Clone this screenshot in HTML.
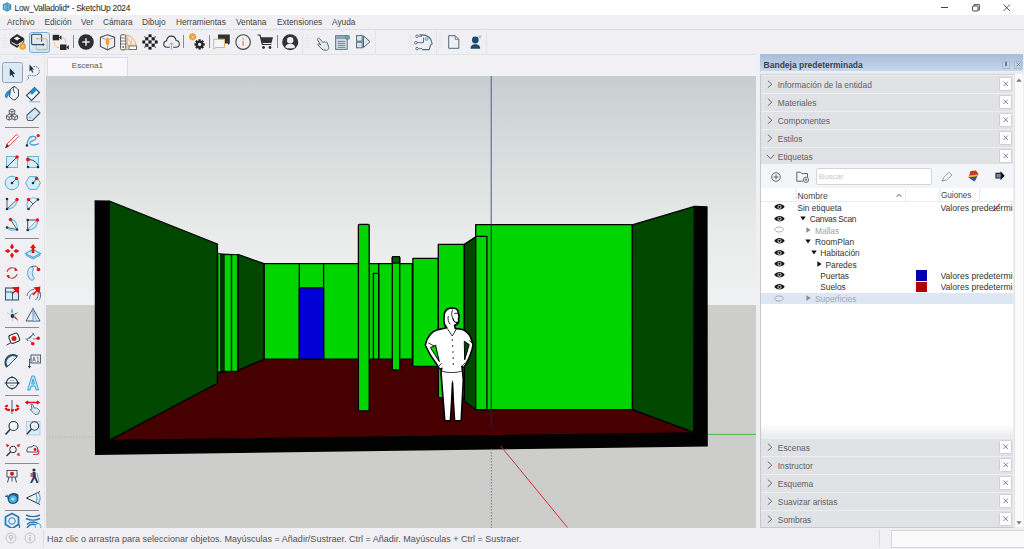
<!DOCTYPE html>
<html><head><meta charset="utf-8"><style>
*{margin:0;padding:0;box-sizing:border-box}
html,body{width:1024px;height:549px;overflow:hidden;background:#f0f0f4;font-family:"Liberation Sans",sans-serif;color:#333}
.a{position:absolute}
.t{position:absolute;white-space:nowrap;line-height:1}
svg.a{overflow:visible}
</style></head><body>
<div class="a" style="left:0px;top:0px;width:1024px;height:15px;background:#fff"></div>
<svg class="a" style="left:1.5px;top:2px" width="10" height="10" viewBox="0 0 10 10"><path d="M5,0.3 L9.2,2.6 V7.4 L5,9.7 L0.8,7.4 V2.6 Z" fill="#3d8fc0"/><path d="M2.5,3.2 V7 M4,2.4 V8 M5.5,2.2 C7.5,2.5 7.8,4 6.5,4.8 M5.5,5.2 C7.5,5.5 7.8,7.2 5.5,7.8" fill="none" stroke="#bfe0f2" stroke-width="0.7"/></svg>
<div class="t" style="left:14.5px;top:3.5px;font-size:8.4px;letter-spacing:-0.26px;color:#1a1a1a">Low_Valladolid* - SketchUp 2024</div>
<div class="a" style="left:941px;top:6.5px;width:7px;height:1px;background:#444"></div>
<svg class="a" style="left:971.5px;top:3.8px" width="8" height="7.5"><path d="M2,2 V0.6 H7.4 V6 H6" fill="none" stroke="#444" stroke-width="0.9"/><rect x="0.6" y="2" width="5.4" height="5" rx="0.6" fill="none" stroke="#444" stroke-width="1"/></svg>
<svg class="a" style="left:1003.3px;top:3.8px" width="7.5" height="7.5"><path d="M0.5,0.5 L7,7 M7,0.5 L0.5,7" stroke="#444" stroke-width="0.9"/></svg>

<div class="a" style="left:0px;top:15px;width:1024px;height:15px;background:#f0f0f4"></div>
<div class="t" style="left:7px;top:17.6px;font-size:8.3px;color:#444;">Archivo</div>
<div class="t" style="left:44.5px;top:17.6px;font-size:8.3px;color:#444;">Edición</div>
<div class="t" style="left:81px;top:17.6px;font-size:8.3px;color:#444;">Ver</div>
<div class="t" style="left:103px;top:17.6px;font-size:8.3px;color:#444;">Cámara</div>
<div class="t" style="left:142px;top:17.6px;font-size:8.3px;color:#444;">Dibujo</div>
<div class="t" style="left:176px;top:17.6px;font-size:8.3px;color:#444;">Herramientas</div>
<div class="t" style="left:236px;top:17.6px;font-size:8.3px;color:#444;">Ventana</div>
<div class="t" style="left:277px;top:17.6px;font-size:8.3px;color:#444;">Extensiones</div>
<div class="t" style="left:332px;top:17.6px;font-size:8.3px;color:#444;">Ayuda</div>
<div class="a" style="left:0px;top:29px;width:1024px;height:1px;background:#dedee2"></div>
<div class="a" style="left:0px;top:30px;width:1024px;height:24px;background:#f0f0f4"></div>
<div class="a" style="left:0px;top:54px;width:1024px;height:1px;background:#e3e3e7"></div>
<svg class="a" style="left:3px;top:34px" width="4" height="15" viewBox="0 0 4 15"><circle cx="1" cy="1" r="0.5" fill="#d4d4d8"/><circle cx="3" cy="1" r="0.5" fill="#d4d4d8"/><circle cx="1" cy="4" r="0.5" fill="#d4d4d8"/><circle cx="3" cy="4" r="0.5" fill="#d4d4d8"/><circle cx="1" cy="7" r="0.5" fill="#d4d4d8"/><circle cx="3" cy="7" r="0.5" fill="#d4d4d8"/><circle cx="1" cy="10" r="0.5" fill="#d4d4d8"/><circle cx="3" cy="10" r="0.5" fill="#d4d4d8"/><circle cx="1" cy="13" r="0.5" fill="#d4d4d8"/><circle cx="3" cy="13" r="0.5" fill="#d4d4d8"/></svg>
<svg class="a" style="left:10px;top:34px" width="17" height="17" viewBox="0 0 17 17"><path d="M7,0.4 L13.8,4.2 V8.4 L7,13.4 L0.4,9.4 V5 Z" fill="#252525" stroke="#252525" stroke-width="0.6" stroke-linejoin="round"/><path d="M7,2.6 L10.2,4.5 L7,6.4 L3.8,4.5 Z" fill="#f2f2f2"/><path d="M1.6,8.3 L7,11.2 L13.6,6.9" fill="none" stroke="#f2f2f2" stroke-width="1"/><circle cx="12.6" cy="12.4" r="3.9" fill="#f0f0f4"/><circle cx="12.6" cy="12.4" r="3.3" fill="#eea030"/><circle cx="12.6" cy="12.4" r="1.1" fill="#f8d890"/></svg>
<div class="a" style="left:29.3px;top:32px;width:20.5px;height:20.5px;background:linear-gradient(#e2eefa,#d2e5f6);border:1px solid #80acd4;border-radius:3px"></div>
<svg class="a" style="left:31px;top:33px" width="18" height="18" viewBox="0 0 18 18"><path d="M10.6,8.6 V2.6 Q10.6,1.3 9.3,1.3 H1.9 Q0.6,1.3 0.6,2.6 V10.3 Q0.6,11.6 1.9,11.6 H12.2" fill="none" stroke="#3a4858" stroke-width="1.1"/><path d="M11.8,10 L13.8,11.6 L11.8,13.2 Z" fill="#3a4858"/><path d="M16.3,7 V15.3 Q16.3,16.6 15,16.6 H6.6 Q5.3,16.6 5.3,15.3 V12.6 M6.5,5.7 H15 Q16.3,5.7 16.3,7" fill="none" stroke="#e4b478" stroke-width="1.1"/><path d="M6.8,4.2 L4.6,5.7 L6.8,7.2 Z" fill="#e4a850"/></svg>
<svg class="a" style="left:52px;top:33.5px" width="18" height="18" viewBox="0 0 18 18"><rect x="0.7" y="0.8" width="6.5" height="5.5" fill="#2a2a2a"/><path d="M7,3.5 L9.5,1.2 V6 Z" fill="#2a2a2a"/><rect x="8" y="10.5" width="6.5" height="5.5" fill="#2a2a2a"/><path d="M14.3,13.2 L16.8,11 V15.8 Z" fill="#2a2a2a"/><path d="M10,3.8 C13,3.8 14,5.5 13.5,9 M2.5,8 C2.5,12 4,13.5 7,13.5" fill="none" stroke="#e8c070" stroke-width="1"/></svg>
<div class="a" style="left:73px;top:35.3px;width:1px;height:13px;background:#8a8a8e"></div>
<svg class="a" style="left:78px;top:34.2px" width="16" height="16" viewBox="0 0 16 16"><circle cx="8" cy="8" r="7.8" fill="#2e2e2e"/><path d="M8,4.3 V11.7 M4.3,8 H11.7" stroke="#e8e8e8" stroke-width="1.5"/></svg>
<svg class="a" style="left:98.5px;top:33.5px" width="17" height="17" viewBox="0 0 17 17"><path d="M8.5,0.8 L15.6,3.2 V12.5 L8.5,15.8 L1.4,12.5 V3.2 Z" fill="#f0f0f4" stroke="#555" stroke-width="1.1"/><path d="M1.6,3.4 L8.5,6 L15.4,3.4 M8.5,6 V15.5" fill="none" stroke="#777" stroke-width="0.6"/><path d="M8.5,2.8 C11,6 11,9.5 8.5,12.5 C6,9.5 6,6 8.5,2.8 Z" fill="#eea030"/></svg>
<svg class="a" style="left:120px;top:33.5px" width="18" height="17" viewBox="0 0 18 17"><rect x="0.6" y="0.8" width="5.2" height="15" rx="1.2" fill="#fff" stroke="#555" stroke-width="1"/><path d="M1,4 H5.4 M1,7 H5.4 M1,10 H5.4" stroke="#555" stroke-width="0.8"/><circle cx="3.2" cy="13" r="0.9" fill="#555"/><path d="M5.8,1.2 C11,1.2 16.5,6 16.5,15.5 H5.8" fill="none" stroke="#e8a848" stroke-width="1"/><path d="M5.8,5 C9,5 12.5,8.5 12.8,15.5 M5.8,9 C8,9 9.5,11.5 9.5,15.5 M8,2 L7,15.5 M12,5 L9,15.5 M15,9.5 L10,15.5" fill="none" stroke="#e8a848" stroke-width="0.7"/><rect x="9" y="12" width="7.5" height="3.5" fill="#fff" stroke="#555" stroke-width="0.8"/></svg>
<svg class="a" style="left:141.9px;top:34px" width="16" height="16" viewBox="0 0 16 16"><defs><clipPath id="cb"><circle cx="8" cy="8" r="7.8"/></clipPath></defs><g clip-path="url(#cb)"><rect x="0.0" y="0.0" width="3.2" height="3.2" fill="#222"/><rect x="0.0" y="6.4" width="3.2" height="3.2" fill="#222"/><rect x="0.0" y="12.8" width="3.2" height="3.2" fill="#222"/><rect x="3.2" y="3.2" width="3.2" height="3.2" fill="#222"/><rect x="3.2" y="9.600000000000001" width="3.2" height="3.2" fill="#222"/><rect x="6.4" y="0.0" width="3.2" height="3.2" fill="#222"/><rect x="6.4" y="6.4" width="3.2" height="3.2" fill="#222"/><rect x="6.4" y="12.8" width="3.2" height="3.2" fill="#222"/><rect x="9.600000000000001" y="3.2" width="3.2" height="3.2" fill="#222"/><rect x="9.600000000000001" y="9.600000000000001" width="3.2" height="3.2" fill="#222"/><rect x="12.8" y="0.0" width="3.2" height="3.2" fill="#222"/><rect x="12.8" y="6.4" width="3.2" height="3.2" fill="#222"/><rect x="12.8" y="12.8" width="3.2" height="3.2" fill="#222"/></g></svg>
<svg class="a" style="left:162.5px;top:34.5px" width="17" height="15" viewBox="0 0 17 15"><path d="M6.8,12.3 H4 C2.2,12.3 0.7,10.9 0.7,9 C0.7,7.3 1.9,6 3.6,5.7 C4,3 5.9,1.1 8.4,1.1 C10.9,1.1 12.7,3 13.1,5.6 C14.9,5.7 16.3,7.1 16.3,9 C16.3,10.9 14.8,12.3 13,12.3 H10.2" fill="none" stroke="#3a3a3a" stroke-width="1.05"/><path d="M8.5,14.8 V7.8 M6.6,9.8 L8.5,7.7 L10.4,9.8" fill="none" stroke="#eaa040" stroke-width="1"/></svg>
<div class="a" style="left:183px;top:35.3px;width:1px;height:13px;background:#8a8a8e"></div>
<svg class="a" style="left:187px;top:33px" width="20" height="20" viewBox="0 0 20 20"><rect x="4.5" y="0.19999999999999996" width="2.2" height="2.6" fill="#f0a030" transform="rotate(0 5.6 3.8)"/><rect x="4.5" y="0.19999999999999996" width="2.2" height="2.6" fill="#f0a030" transform="rotate(45 5.6 3.8)"/><rect x="4.5" y="0.19999999999999996" width="2.2" height="2.6" fill="#f0a030" transform="rotate(90 5.6 3.8)"/><rect x="4.5" y="0.19999999999999996" width="2.2" height="2.6" fill="#f0a030" transform="rotate(135 5.6 3.8)"/><rect x="4.5" y="0.19999999999999996" width="2.2" height="2.6" fill="#f0a030" transform="rotate(180 5.6 3.8)"/><rect x="4.5" y="0.19999999999999996" width="2.2" height="2.6" fill="#f0a030" transform="rotate(225 5.6 3.8)"/><rect x="4.5" y="0.19999999999999996" width="2.2" height="2.6" fill="#f0a030" transform="rotate(270 5.6 3.8)"/><rect x="4.5" y="0.19999999999999996" width="2.2" height="2.6" fill="#f0a030" transform="rotate(315 5.6 3.8)"/><circle cx="5.6" cy="3.8" r="2.4" fill="#f0a030"/><circle cx="5.6" cy="3.8" r="0.9" fill="#f0f0f4"/><rect x="11.5" y="6.2" width="2.2" height="2.6" fill="#2a2a2a" transform="rotate(0 12.6 11.4)"/><rect x="11.5" y="6.2" width="2.2" height="2.6" fill="#2a2a2a" transform="rotate(45 12.6 11.4)"/><rect x="11.5" y="6.2" width="2.2" height="2.6" fill="#2a2a2a" transform="rotate(90 12.6 11.4)"/><rect x="11.5" y="6.2" width="2.2" height="2.6" fill="#2a2a2a" transform="rotate(135 12.6 11.4)"/><rect x="11.5" y="6.2" width="2.2" height="2.6" fill="#2a2a2a" transform="rotate(180 12.6 11.4)"/><rect x="11.5" y="6.2" width="2.2" height="2.6" fill="#2a2a2a" transform="rotate(225 12.6 11.4)"/><rect x="11.5" y="6.2" width="2.2" height="2.6" fill="#2a2a2a" transform="rotate(270 12.6 11.4)"/><rect x="11.5" y="6.2" width="2.2" height="2.6" fill="#2a2a2a" transform="rotate(315 12.6 11.4)"/><circle cx="12.6" cy="11.4" r="4" fill="#2a2a2a"/><circle cx="12.6" cy="11.4" r="1.6" fill="#f0f0f4"/></svg>
<div class="a" style="left:209px;top:35.3px;width:1px;height:13px;background:#8a8a8e"></div>
<svg class="a" style="left:213px;top:33.5px" width="18" height="15" viewBox="0 0 18 15"><path d="M5,0.5 H16.8 V9.5 L15,11 V9.5 H5 Z" fill="#333"/><path d="M0.8,5.2 H11.5 V13.6 H3 L0.8,15 Z" fill="#f0f0f4" stroke="#e2b26a" stroke-width="1"/><rect x="1.6" y="6" width="9" height="6.8" fill="#f4f6fa"/></svg>
<svg class="a" style="left:235px;top:33.8px" width="16.5" height="16.5" viewBox="0 0 16.5 16.5"><circle cx="8.1" cy="8.1" r="7.3" fill="none" stroke="#444" stroke-width="1.1"/><rect x="7.4" y="6.8" width="1.5" height="5" fill="#eea040"/><rect x="7.4" y="4" width="1.5" height="1.6" fill="#eea040"/></svg>
<svg class="a" style="left:256.5px;top:34px" width="17" height="16" viewBox="0 0 17 16"><path d="M0.5,1 H3 L5.3,10.5 H14.5" fill="none" stroke="#333" stroke-width="1.2"/><path d="M3.6,3.2 H16 L14.5,9 H5 Z" fill="#333"/><circle cx="6.5" cy="13.5" r="1.4" fill="#333"/><circle cx="13" cy="13.5" r="1.4" fill="#333"/></svg>
<div class="a" style="left:277px;top:35.3px;width:1px;height:13px;background:#8a8a8e"></div>
<svg class="a" style="left:281.8px;top:33.7px" width="16.5" height="16.5" viewBox="0 0 16.5 16.5"><circle cx="8.2" cy="8.2" r="8" fill="#333"/><circle cx="8.2" cy="6.3" r="3.2" fill="#f0f0f4"/><path d="M3.2,13.2 C4,10.5 6,9.8 8.2,9.8 C10.4,9.8 12.4,10.5 13.2,13.2 C11.5,14.8 5,14.8 3.2,13.2 Z" fill="#f0f0f4"/></svg>
<div class="a" style="left:302px;top:31px;width:1px;height:23px;background:#e4e4e8"></div>
<svg class="a" style="left:305px;top:34px" width="4" height="15" viewBox="0 0 4 15"><circle cx="1" cy="1" r="0.5" fill="#d4d4d8"/><circle cx="3" cy="1" r="0.5" fill="#d4d4d8"/><circle cx="1" cy="4" r="0.5" fill="#d4d4d8"/><circle cx="3" cy="4" r="0.5" fill="#d4d4d8"/><circle cx="1" cy="7" r="0.5" fill="#d4d4d8"/><circle cx="3" cy="7" r="0.5" fill="#d4d4d8"/><circle cx="1" cy="10" r="0.5" fill="#d4d4d8"/><circle cx="3" cy="10" r="0.5" fill="#d4d4d8"/><circle cx="1" cy="13" r="0.5" fill="#d4d4d8"/><circle cx="3" cy="13" r="0.5" fill="#d4d4d8"/></svg>
<svg class="a" style="left:316px;top:37px" width="14" height="14" viewBox="0 0 14 14"><path d="M1.5,1.8 C2.2,0.8 3.2,1 3.8,1.8 L7,5.6 L7.5,4.8 C8.2,4.4 9,4.8 9.3,5.5 L9.8,5 C10.5,4.8 11.2,5.2 11.4,6 L12.8,10.5 C13,12 12,13.2 10.5,13.2 L7.5,13 C6.5,12.8 5.5,12 4.8,11 L2,8 C1.5,7.3 2.2,6.4 3,6.8 L4.8,8 L1.6,3 C1.3,2.5 1.3,2.1 1.5,1.8 Z" fill="#e6ebe8" stroke="#4a5e6e" stroke-width="0.9" stroke-linejoin="round"/></svg>
<svg class="a" style="left:334.5px;top:34.5px" width="15" height="15" viewBox="0 0 15 15"><rect x="0.7" y="0.7" width="11.5" height="13.6" fill="#e6edf3" stroke="#52687a" stroke-width="1"/><rect x="1.2" y="1.2" width="10.5" height="3" fill="#8aa0b0"/><path d="M2.5,6.3 H10.5 M2.5,8.3 H10.5 M2.5,10.3 H10.5 M2.5,12.3 H10.5" stroke="#52687a" stroke-width="0.9"/><rect x="10.8" y="0.6" width="3.6" height="3.6" rx="0.6" fill="#6ab0b8" stroke="#52687a" stroke-width="0.6"/></svg>
<svg class="a" style="left:355.8px;top:35.3px" width="15" height="13.5" viewBox="0 0 15 13.5"><rect x="0.6" y="0.6" width="5.6" height="5.6" fill="#dde6ee" stroke="#52687a" stroke-width="1"/><rect x="0.6" y="7.2" width="5.6" height="5.6" fill="#dde6ee" stroke="#52687a" stroke-width="1"/><path d="M7.5,0.8 L14,6.7 L7.5,12.6 Z" fill="#dde8f2" stroke="#52687a" stroke-width="1"/></svg>
<div class="a" style="left:375.2px;top:31px;width:1px;height:23px;background:#e4e4e8"></div>
<svg class="a" style="left:407.5px;top:34px" width="4" height="15" viewBox="0 0 4 15"><circle cx="1" cy="1" r="0.5" fill="#d4d4d8"/><circle cx="3" cy="1" r="0.5" fill="#d4d4d8"/><circle cx="1" cy="4" r="0.5" fill="#d4d4d8"/><circle cx="3" cy="4" r="0.5" fill="#d4d4d8"/><circle cx="1" cy="7" r="0.5" fill="#d4d4d8"/><circle cx="3" cy="7" r="0.5" fill="#d4d4d8"/><circle cx="1" cy="10" r="0.5" fill="#d4d4d8"/><circle cx="3" cy="10" r="0.5" fill="#d4d4d8"/><circle cx="1" cy="13" r="0.5" fill="#d4d4d8"/><circle cx="3" cy="13" r="0.5" fill="#d4d4d8"/></svg>
<svg class="a" style="left:414px;top:33.5px" width="19" height="16.5" viewBox="0 0 19 16.5"><path d="M5.5,0.9 C9.5,0.6 14.5,1.2 16.8,5.5 L18.2,9.8 L16.5,11.2 L15.2,15.6 H8" fill="none" stroke="#52687a" stroke-width="1.1" stroke-linejoin="round"/><path d="M4.2,2.3 H7.8 V0.9 M3,8.7 H9.5 V3.5 M4.2,14.6 H8" fill="none" stroke="#52687a" stroke-width="0.9"/><circle cx="3" cy="2.3" r="1.3" fill="#f0f0f4" stroke="#52687a" stroke-width="0.9"/><circle cx="1.8" cy="8.7" r="1.3" fill="#f0f0f4" stroke="#52687a" stroke-width="0.9"/><circle cx="3" cy="14.6" r="1.3" fill="#f0f0f4" stroke="#52687a" stroke-width="0.9"/><circle cx="12.5" cy="5" r="1.6" fill="#9ad8e0" stroke="#3aa8b8" stroke-width="0.7"/></svg>
<div class="a" style="left:435.6px;top:31px;width:1px;height:23px;background:#e4e4e8"></div>
<svg class="a" style="left:438px;top:34px" width="4" height="15" viewBox="0 0 4 15"><circle cx="1" cy="1" r="0.5" fill="#d4d4d8"/><circle cx="3" cy="1" r="0.5" fill="#d4d4d8"/><circle cx="1" cy="4" r="0.5" fill="#d4d4d8"/><circle cx="3" cy="4" r="0.5" fill="#d4d4d8"/><circle cx="1" cy="7" r="0.5" fill="#d4d4d8"/><circle cx="3" cy="7" r="0.5" fill="#d4d4d8"/><circle cx="1" cy="10" r="0.5" fill="#d4d4d8"/><circle cx="3" cy="10" r="0.5" fill="#d4d4d8"/><circle cx="1" cy="13" r="0.5" fill="#d4d4d8"/><circle cx="3" cy="13" r="0.5" fill="#d4d4d8"/></svg>
<svg class="a" style="left:448px;top:35px" width="12" height="14" viewBox="0 0 12 14"><path d="M0.7,0.7 H7.2 L10.8,4.3 V13.3 H0.7 Z" fill="#eef0f4" stroke="#52687a" stroke-width="1"/><path d="M7.2,0.7 V4.3 H10.8" fill="none" stroke="#52687a" stroke-width="0.8"/></svg>
<svg class="a" style="left:469.5px;top:35px" width="12" height="14.5" viewBox="0 0 12 14.5"><circle cx="5.3" cy="5" r="3.4" fill="#1f4a6c"/><path d="M0.5,13.8 C0.5,10.5 2.5,9.3 5.3,9.3 C8.1,9.3 10.2,10.5 10.2,13.8 Z" fill="#1f4a6c"/><path d="M10,0.3 V3.3 M8.5,1.8 H11.5" stroke="#6ac0d0" stroke-width="0.9"/></svg>
<div class="a" style="left:486px;top:31px;width:1px;height:23px;background:#e4e4e8"></div>
<div class="a" style="left:0px;top:55px;width:45px;height:473px;background:#f0f0f4"></div>
<div class="a" style="left:44px;top:55px;width:1px;height:473px;background:#e6e6ea"></div>
<svg class="a" style="left:14px;top:55.5px" width="16" height="3"><circle cx="1" cy="1.5" r="0.5" fill="#c8c8cc"/><circle cx="4" cy="1.5" r="0.5" fill="#c8c8cc"/><circle cx="7" cy="1.5" r="0.5" fill="#c8c8cc"/><circle cx="10" cy="1.5" r="0.5" fill="#c8c8cc"/><circle cx="13" cy="1.5" r="0.5" fill="#c8c8cc"/></svg>
<div class="a" style="left:5px;top:127px;width:34.3px;height:1.2px;background:#8c8c90"></div>
<div class="a" style="left:5px;top:238px;width:34.3px;height:1.2px;background:#8c8c90"></div>
<div class="a" style="left:5px;top:327px;width:34.3px;height:1.2px;background:#8c8c90"></div>
<div class="a" style="left:5px;top:395px;width:34.3px;height:1.2px;background:#8c8c90"></div>
<div class="a" style="left:5px;top:463px;width:34.3px;height:1.2px;background:#8c8c90"></div>
<div class="a" style="left:5px;top:510px;width:34.3px;height:1.2px;background:#8c8c90"></div>
<div class="a" style="left:2px;top:62px;width:20.5px;height:20.5px;background:#dce8f4;border:1px solid #8aa8c0;border-radius:2.5px"></div>
<svg class="a" style="left:2.0px;top:62.0px" width="20" height="20" viewBox="0 0 20 20"><path d="M7.8,6.3 L7.8,14.2 L9.6,12.5 L11,15.3 L12.2,14.7 L10.9,12 L13.3,11.8 Z" fill="#1b3550"/></svg>
<svg class="a" style="left:23.299999999999997px;top:62.0px" width="20" height="20" viewBox="0 0 20 20"><path d="M6.5,2.5 L6.5,9.5 L8,8 L9.3,10.8 L10.3,10.3 L9,7.6 L11.2,7.5 Z" fill="#1b3550"/><path d="M10.5,4.5 C15,4 17,7 16,10.5 C15,13.5 11,14.5 8,13.5 C5,12.5 4,14.5 6,16 C5,17 4,17.5 3.5,18" fill="none" stroke="#3a7ab0" stroke-width="0.9" stroke-dasharray="1.6,0.8"/></svg>
<svg class="a" style="left:2.0px;top:83.2px" width="20" height="20" viewBox="0 0 20 20"><path d="M3,14 C2.5,11 4.5,8 8,6.5 L10.5,9.5 C8,10.5 6,12 5,15.5 Z" fill="#2a8ed0"/><path d="M8.5,6 L12,3.5 C13.5,4 15.5,5.5 16.5,7 L16.5,13 L13,17 C11,17 9,15.5 7.5,13.5 Z" fill="#f0f0f4" stroke="#3a4a58" stroke-width="1"/><path d="M12,3.5 C11,6 11,8.5 13,10" fill="none" stroke="#3a4a58" stroke-width="0.9"/></svg>
<svg class="a" style="left:23.299999999999997px;top:83.2px" width="20" height="20" viewBox="0 0 20 20"><path d="M3.5,12.5 L11.5,4.5 L16.5,9.5 L8.5,17.5 Z" fill="#fff" stroke="#2a4a60" stroke-width="1.1"/><path d="M6.5,9.5 L11.5,4.5 L14,7 L9,12 Z" fill="#2a90c8"/><path d="M6,18.8 H17" stroke="#6aaed8" stroke-width="0.9"/></svg>
<svg class="a" style="left:2.0px;top:105.0px" width="20" height="20" viewBox="0 0 20 20"><g fill="#f0f0f4" stroke="#4a5058" stroke-width="0.9" stroke-linejoin="miter"><polygon points="10.00,4.00 12.81,5.45 12.81,8.35 10.00,9.80 7.19,8.35 7.19,5.45"/><path d="M7.19,5.45 L10.00,6.90 L12.81,5.45 M10.00,6.90 V9.80"/><polygon points="7.20,9.30 10.01,10.75 10.01,13.65 7.20,15.10 4.39,13.65 4.39,10.75"/><path d="M4.39,10.75 L7.20,12.20 L10.01,10.75 M7.20,12.20 V15.10"/><polygon points="12.80,9.30 15.61,10.75 15.61,13.65 12.80,15.10 9.99,13.65 9.99,10.75"/><path d="M9.99,10.75 L12.80,12.20 L15.61,10.75 M12.80,12.20 V15.10"/></g></svg>
<svg class="a" style="left:23.299999999999997px;top:105.0px" width="20" height="20" viewBox="0 0 20 20"><path d="M4,14 L4,10 L12,3 L17,8 L9.5,15.5 H5 Z" fill="#d4e8f6" stroke="#4a6478" stroke-width="1.1" stroke-linejoin="round"/><circle cx="7" cy="12.5" r="1" fill="#8ac0e0"/></svg>
<svg class="a" style="left:2.0px;top:130.5px" width="20" height="20" viewBox="0 0 20 20"><path d="M3.5,17 L5,13 L14.5,3.5 L16.5,5.5 L7,15 Z" fill="#fff" stroke="#e05050" stroke-width="1"/><path d="M3.5,17 L5,13 L7,15 Z" fill="#2a2a2a"/></svg>
<svg class="a" style="left:23.299999999999997px;top:130.5px" width="20" height="20" viewBox="0 0 20 20"><path d="M4,14 C4.5,10 6,6 9,5.5 C12,5 14.5,6.5 12,8.5 C9.5,10.5 6,10.5 7,12.5 C8,14.5 13,14.5 15.8,12.5" fill="none" stroke="#4aa0d0" stroke-width="1.3"/><circle cx="4" cy="14.5" r="1.3" fill="#1e3448"/><circle cx="15.2" cy="4.6" r="1.6" fill="#e01818"/></svg>
<svg class="a" style="left:2.0px;top:151.8px" width="20" height="20" viewBox="0 0 20 20"><rect x="4.5" y="4.5" width="11" height="11" fill="#d4ecf8" stroke="#6ab4e0" stroke-width="1"/><path d="M5,15 L15,5" stroke="#2a3a48" stroke-width="0.9"/><circle cx="5" cy="15" r="1.3" fill="#1e3448"/><circle cx="15" cy="5" r="1.8" fill="#e01818"/></svg>
<svg class="a" style="left:23.299999999999997px;top:151.8px" width="20" height="20" viewBox="0 0 20 20"><rect x="4.5" y="4.5" width="11" height="11" fill="#d4ecf8" stroke="#6ab4e0" stroke-width="1"/><path d="M5,7.5 C11,7.5 15,11 15,15" fill="none" stroke="#2a3a48" stroke-width="0.9"/><circle cx="5" cy="15" r="1.3" fill="#1e3448"/><circle cx="15" cy="15" r="1.3" fill="#1e3448"/><circle cx="5" cy="7.5" r="1.9" fill="#e01818"/></svg>
<svg class="a" style="left:2.0px;top:172.8px" width="20" height="20" viewBox="0 0 20 20"><circle cx="10" cy="10" r="6.8" fill="#d4ecf8" stroke="#5aaadc" stroke-width="1"/><path d="M10,10 L14.5,5.5" stroke="#2a3a48" stroke-width="0.8"/><circle cx="10" cy="10" r="1.3" fill="#1e3448"/><circle cx="14.6" cy="5.5" r="1.7" fill="#e01818"/></svg>
<svg class="a" style="left:23.299999999999997px;top:172.8px" width="20" height="20" viewBox="0 0 20 20"><path d="M6.3,3.6 H13.7 L17.4,10 L13.7,16.4 H6.3 L2.6,10 Z" fill="#d4ecf8" stroke="#5aaadc" stroke-width="1"/><path d="M10,10 L13.5,5.5" stroke="#2a3a48" stroke-width="0.8"/><circle cx="10" cy="10" r="1.3" fill="#1e3448"/><circle cx="13.6" cy="5.5" r="1.7" fill="#e01818"/></svg>
<svg class="a" style="left:2.0px;top:193.7px" width="20" height="20" viewBox="0 0 20 20"><path d="M5,5 V15 L15,5.5" fill="none" stroke="#2a3a48" stroke-width="0.8"/><path d="M15,5.5 C15,11 11,15 5,15" fill="none" stroke="#7ac4e8" stroke-width="1.4"/><circle cx="5" cy="5" r="1.3" fill="#1e3448"/><circle cx="5" cy="15" r="1.3" fill="#1e3448"/><circle cx="15" cy="5.5" r="1.7" fill="#e01818"/></svg>
<svg class="a" style="left:23.299999999999997px;top:193.7px" width="20" height="20" viewBox="0 0 20 20"><path d="M5.5,5.5 L10,10 L5.5,15 M10,10 L15,5.5" fill="none" stroke="#2a3a48" stroke-width="0.8"/><path d="M5.5,5.5 C9,3.5 13,4 15,5.5 M5.5,5.5 C3.5,9 4,13 5.5,15" fill="none" stroke="#7ac4e8" stroke-width="1.3"/><circle cx="15" cy="5.5" r="1.3" fill="#1e3448"/><circle cx="5.5" cy="15" r="1.3" fill="#1e3448"/><circle cx="5.5" cy="5.5" r="1.7" fill="#e01818"/></svg>
<svg class="a" style="left:2.0px;top:214.7px" width="20" height="20" viewBox="0 0 20 20"><path d="M8.5,4.5 L15,14.5 L5,12.5" fill="none" stroke="#2a3a48" stroke-width="0.8"/><path d="M8.5,4.5 C14,5 16,10 15,14.5 M5,12.5 C7,15 11,15.5 15,14.5" fill="none" stroke="#7ac4e8" stroke-width="1.3"/><circle cx="5" cy="12.5" r="1.3" fill="#1e3448"/><circle cx="15" cy="14.5" r="1.3" fill="#1e3448"/><circle cx="8.5" cy="4.5" r="1.7" fill="#e01818"/></svg>
<svg class="a" style="left:23.299999999999997px;top:214.7px" width="20" height="20" viewBox="0 0 20 20"><path d="M4.7,5 H14.5 M4.7,5 V15 L14.5,5" fill="none" stroke="#2a3a48" stroke-width="0.9"/><path d="M14.5,5 C15,11 11,15 4.7,15" fill="#d4ecf8" stroke="#7ac4e8" stroke-width="1.3"/><circle cx="4.7" cy="5" r="1.3" fill="#1e3448"/><circle cx="4.7" cy="15" r="1.3" fill="#1e3448"/><circle cx="14.5" cy="5" r="1.7" fill="#e01818"/></svg>
<svg class="a" style="left:2.0px;top:240.5px" width="20" height="20" viewBox="0 0 20 20"><g fill="#e01010"><path d="M10,2.5 L12,6 L10,8.5 L8,6 Z"/><path d="M10,17.5 L12,14 L10,11.5 L8,14 Z"/><path d="M2.5,10 L6,8 L8.5,10 L6,12 Z"/><path d="M17.5,10 L14,8 L11.5,10 L14,12 Z"/></g></svg>
<svg class="a" style="left:23.299999999999997px;top:240.5px" width="20" height="20" viewBox="0 0 20 20"><path d="M2.5,12.5 L10,8.5 L17.5,12.5 L10,16.5 Z" fill="#d4ecf8" stroke="#4aa8d8" stroke-width="1.2"/><path d="M2.5,14 L10,18 L17.5,14" fill="none" stroke="#4aa8d8" stroke-width="1"/><path d="M10,3 L13,7 H11.3 V12 H8.7 V7 H7 Z" fill="#e01010"/></svg>
<svg class="a" style="left:2.0px;top:262.7px" width="20" height="20" viewBox="0 0 20 20"><path d="M5,9 A5.3,5.3 0 0 1 14.5,7 M15,11 A5.3,5.3 0 0 1 5.5,13" fill="none" stroke="#c84858" stroke-width="1.1"/><path d="M13,4.5 L16,7.5 L12.5,8 Z M7,15.5 L4,12.5 L7.5,12 Z" fill="#e01010"/></svg>
<svg class="a" style="left:23.299999999999997px;top:262.7px" width="20" height="20" viewBox="0 0 20 20"><path d="M8.5,3.5 C4.5,5 3.5,10 6,15 L9,17.5 L11.5,15.5 C9,12.5 8.5,9 10.5,6 Z" fill="#d4ecf8" stroke="#4aa0d0" stroke-width="1"/><path d="M8.5,4 C11,2.5 13.5,3 15,5" fill="none" stroke="#2a3a48" stroke-width="0.8"/><circle cx="15.5" cy="6.5" r="1.8" fill="#e01818"/></svg>
<svg class="a" style="left:2.0px;top:283.7px" width="20" height="20" viewBox="0 0 20 20"><rect x="3.5" y="4" width="13" height="12" fill="#d4ecf8" stroke="#3a5870" stroke-width="1.1"/><path d="M3.5,8 H10.5 V16" fill="none" stroke="#3a5870" stroke-width="1"/><path d="M10,10 L15,5 M11.5,4 L16.5,3.5 L16,8.5 Z" fill="#e01010" stroke="#e01010" stroke-width="1.4"/></svg>
<svg class="a" style="left:23.299999999999997px;top:283.7px" width="20" height="20" viewBox="0 0 20 20"><path d="M4,12 C4.5,8 7.5,5.5 11,5.5 M6.5,15 C6.5,11.5 8.5,9 11,9 M12.5,16 C15,14 15.5,11 15,8.5 M15.5,16.5 C18,14 18,10 17,8" fill="none" stroke="#4a6a88" stroke-width="1"/><path d="M10,11 L14.5,6 M12,4 L16.5,3.5 L16,8 Z" fill="#e01010" stroke="#e01010" stroke-width="1.6"/></svg>
<svg class="a" style="left:2.0px;top:304.7px" width="20" height="20" viewBox="0 0 20 20"><path d="M10.5,10.5 L10,4 M10.5,10.5 L16,8 M10.5,10.5 L16,15.5 M10.5,10.5 L5,7.5 M10.5,10.5 L10.5,16" stroke="#90c8a0" stroke-width="0.6"/><path d="M10,3 L11,7.5 L9,7.5 Z" fill="#3a9ad0"/><path d="M16.5,7.5 L12,10 L13,8 Z" fill="#38a040"/><path d="M16.5,16 L12,12.5 L13.5,11.5 Z" fill="#e01818"/><circle cx="10.5" cy="11" r="1.9" fill="#1e3448"/></svg>
<svg class="a" style="left:23.299999999999997px;top:304.7px" width="20" height="20" viewBox="0 0 20 20"><path d="M10,3.5 L17,16 H3 Z" fill="#f0f0f4" stroke="#3a5870" stroke-width="1"/><path d="M10,3.5 L13.5,16 H10 Z" fill="#d4ecf8" stroke="#5ab0d8" stroke-width="0.8"/><path d="M10,2.5 V17" stroke="#d05060" stroke-width="0.7" stroke-dasharray="1,0.8"/></svg>
<svg class="a" style="left:2.0px;top:329.3px" width="20" height="20" viewBox="0 0 20 20"><rect x="7.5" y="5" width="9.5" height="8.5" rx="2" transform="rotate(-22 12.2 9.2)" fill="#f4f6f8" stroke="#2a3a48" stroke-width="1.1"/><circle cx="12" cy="9.6" r="2.5" fill="#e01010"/><path d="M8.8,13.6 L4.6,16.2" stroke="#2a3a48" stroke-width="1"/></svg>
<svg class="a" style="left:23.299999999999997px;top:329.3px" width="20" height="20" viewBox="0 0 20 20"><path d="M4,10.5 L10.5,5 M5,12 L3,9.5 M11.5,6.5 L9.5,3.8 M6.5,9.5 L8.3,7.5" stroke="#3a5a78" stroke-width="1"/><path d="M10,10 L14.5,9.5 M7,11.5 L9.5,15" stroke="#3a5a78" stroke-width="0.7"/><circle cx="15.2" cy="9.2" r="1.8" fill="#e01818"/><circle cx="9.8" cy="14.8" r="1.8" fill="#e01818"/></svg>
<svg class="a" style="left:2.0px;top:351.8px" width="20" height="20" viewBox="0 0 20 20"><g transform="translate(1.6 2) scale(0.82)"><path d="M4.2,15.8 A9,9 0 0 1 16.8,3.2 Z" fill="#e4ecf2"/><path d="M4.2,15.8 A9,9 0 0 1 16.8,3.2" fill="none" stroke="#2a4a68" stroke-width="2.8"/><path d="M4.2,15.8 L16.8,3.2" stroke="#2a4a68" stroke-width="1.2"/><path d="M6.2,9 L8,9.8 M8.6,5.8 L9.8,7.2 M12.2,3.8 L12.8,5.5" stroke="#e4ecf2" stroke-width="0.7"/></g></svg>
<svg class="a" style="left:23.299999999999997px;top:351.8px" width="20" height="20" viewBox="0 0 20 20"><rect x="8" y="3" width="9.5" height="8" fill="#f0f0f4" stroke="#5a6a78" stroke-width="1.1"/><path d="M9.6,9.5 L11,4.8 L12.4,9.5 M10.1,8 H11.9 M13.8,5.6 L14.9,4.8 V9.5 M14,9.5 H15.8" fill="none" stroke="#3a4a58" stroke-width="0.6"/><path d="M8,7 H6.5 V14.5" fill="none" stroke="#3a4a58" stroke-width="0.9"/><path d="M5,14 L6.5,16.5 L8,14 Z" fill="#1e2a38"/></svg>
<svg class="a" style="left:2.0px;top:372.6px" width="20" height="20" viewBox="0 0 20 20"><circle cx="10" cy="10" r="5.6" fill="#eef3f7" stroke="#2a3a48" stroke-width="1.1"/><path d="M2.5,10 H15.8" stroke="#2a3a48" stroke-width="1"/><path d="M15,7.8 L18,10 L15,12.2 Z" fill="#2a3a48"/><path d="M10,3.2 V4.6 M10,15.4 V16.8" stroke="#2a3a48" stroke-width="1"/><path d="M8,7.5 H12 M8,12.5 H12" stroke="#7a8a98" stroke-width="0.6"/></svg>
<svg class="a" style="left:23.299999999999997px;top:372.6px" width="20" height="20" viewBox="0 0 20 20"><path d="M8.8,3 H11.4 L15.6,17 H13 L12,13.2 H8.2 L7.2,17 H4.6 Z M8.8,11 H11.4 L10.1,6.2 Z" fill="#bfe6f8" stroke="#2a9ad8" stroke-width="0.9" stroke-linejoin="round"/></svg>
<svg class="a" style="left:2.0px;top:397.3px" width="20" height="20" viewBox="0 0 20 20"><path d="M10,3 V17" stroke="#7a8898" stroke-width="1.4"/><path d="M6,8.5 C3,9 2.5,11.5 5,12.5 M14,8.5 C17,9 17.5,11.5 15,12.5 M5,12.5 C7,13.5 13,13.5 15,12.5" fill="none" stroke="#e01010" stroke-width="2.2" stroke-dasharray="3,1"/></svg>
<svg class="a" style="left:23.299999999999997px;top:397.3px" width="20" height="20" viewBox="0 0 20 20"><path d="M3,5.5 H16 M5,4 L3,5.5 L5,7 M14,4 L16,5.5 L14,7" fill="none" stroke="#e01010" stroke-width="1.5"/><path d="M8,7 L10,8 L11,11 L14,11 L16.5,13.5 L15.5,17 L12,17.5 L7,12.5 L9,12 Z" fill="#d4ecf8" stroke="#5a6a7a" stroke-width="0.9" stroke-linejoin="round"/></svg>
<svg class="a" style="left:2.0px;top:418.2px" width="20" height="20" viewBox="0 0 20 20"><circle cx="11.5" cy="8" r="4.5" fill="#f4f6f8" stroke="#2a3a48" stroke-width="1.2"/><path d="M8.3,11.2 L3.5,16.5" stroke="#2a3a48" stroke-width="1.6"/></svg>
<svg class="a" style="left:23.299999999999997px;top:418.2px" width="20" height="20" viewBox="0 0 20 20"><rect x="3.5" y="3.5" width="13.5" height="13.5" fill="#dbeaf5" stroke="#9ac6e0" stroke-width="0.7"/><circle cx="11.5" cy="8" r="4.2" fill="#e8f2f8" stroke="#2a3a48" stroke-width="1.1"/><path d="M8.5,11 L4,16" stroke="#2a3a48" stroke-width="1.5"/></svg>
<svg class="a" style="left:2.0px;top:440.2px" width="20" height="20" viewBox="0 0 20 20"><circle cx="11" cy="9.5" r="3.3" fill="#f4f6f8" stroke="#2a3a48" stroke-width="1"/><path d="M8.5,12 L4.5,16" stroke="#2a3a48" stroke-width="1.4"/><g fill="#e01010"><path d="M4,4 L7.5,5 L5,7.5 Z"/><path d="M18,4 L14.5,5 L17,7.5 Z"/><path d="M18,16 L14.5,15 L17,12.5 Z"/></g></svg>
<svg class="a" style="left:23.299999999999997px;top:440.2px" width="20" height="20" viewBox="0 0 20 20"><path d="M4,9 L5.5,7 H9 L10,5.5 C12,5.5 14,6.5 14.5,8 V12 H4 Z" fill="#f0f0f4" stroke="#4a5a68" stroke-width="1"/><circle cx="12" cy="9.5" r="1.4" fill="#e01010"/><path d="M14,9.5 C17,10.5 16.5,14.5 13,14.5 H10" fill="none" stroke="#e04040" stroke-width="1.1"/></svg>
<svg class="a" style="left:2.0px;top:466.0px" width="20" height="20" viewBox="0 0 20 20"><rect x="5" y="4.5" width="10" height="6.5" fill="#f0f0f4" stroke="#4a5a68" stroke-width="1"/><circle cx="10" cy="7.8" r="2" fill="#e01010"/><path d="M7,11 L5.5,16.5 M13,11 L14.5,16.5 M10,11 V15.5" stroke="#3a4a58" stroke-width="1"/></svg>
<svg class="a" style="left:23.299999999999997px;top:466.0px" width="20" height="20" viewBox="0 0 20 20"><circle cx="11" cy="4" r="1.6" fill="#1e3448"/><path d="M9.5,6 L12.5,6 L13,11 L15.5,17 H13.5 L11.5,12.5 L9,17 H7 L10,11 Z" fill="#1e4468"/><rect x="7.5" y="7" width="2.5" height="4" fill="#e05050"/><path d="M14,7 L16,16" stroke="#5a6a78" stroke-width="0.6"/></svg>
<svg class="a" style="left:2.0px;top:487.6px" width="20" height="20" viewBox="0 0 20 20"><path d="M3,8 L6,9 M4.5,7 L6.5,8.5" stroke="#1e4468" stroke-width="1"/><path d="M5.5,9.5 C6.5,6 9.5,5 12,5 C15,5 16.5,7 16.5,7 L16.5,12 C15.5,15 13,16 11,16 C8,16 6,14 5.5,11 Z" fill="#1e5a88"/><circle cx="11" cy="11" r="3.8" fill="#4ab0e0"/><circle cx="11" cy="11" r="1.6" fill="#a8e0f8"/></svg>
<svg class="a" style="left:23.299999999999997px;top:487.6px" width="20" height="20" viewBox="0 0 20 20"><path d="M17,3.5 L3.5,10 L17,16.5" fill="none" stroke="#2a3a48" stroke-width="1"/><path d="M12.5,5.5 C14.5,8 14.5,12 12.5,14.5 M15.5,5 C17.5,8 17.5,12 15.5,15" fill="none" stroke="#4aa8d8" stroke-width="1.2"/></svg>
<svg class="a" style="left:2.0px;top:510.9px" width="20" height="20" viewBox="0 0 20 20"><path d="M10,2.5 L16.5,6 V13.5 L10,17.5 L3.5,13.5 V6 Z" fill="none" stroke="#2a7ab8" stroke-width="1.8"/><circle cx="10" cy="10" r="3.3" fill="#e8f0f6" stroke="#2a7ab8" stroke-width="1"/><path d="M15,14 H17.5 V18" fill="none" stroke="#2a7ab8" stroke-width="1.2"/></svg>
<svg class="a" style="left:23.299999999999997px;top:510.9px" width="20" height="20" viewBox="0 0 20 20"><path d="M3,4 C7,6 13,6 17,4 M3,7.5 C7,9.5 13,9.5 17,7.5 M4,17 C7,12 13,12 16,17 M4,13.5 C7,10 13,10 16,13.5" fill="none" stroke="#2a7ab8" stroke-width="1.5"/><circle cx="15" cy="15.5" r="3" fill="#e8f0f6" stroke="#4aa8d8" stroke-width="0.9"/></svg>
<div class="a" style="left:46px;top:55px;width:710px;height:21px;background:#f2f2f5"></div>
<div class="a" style="left:46.5px;top:56.5px;width:81px;height:19.5px;background:#f8f8fa;border:1px solid #dcdce0;border-bottom:none"></div>
<div class="t" style="left:71.8px;top:62.2px;font-size:8px;color:#555;">Escena1</div>
<div class="a" style="left:46px;top:76px;width:710px;height:452px;overflow:hidden"><svg width="710" height="452" viewBox="46 76 710 452" style="display:block">
<defs>
<linearGradient id="sky" x1="0" y1="0" x2="0" y2="1">
<stop offset="0" stop-color="#c8ced0"/><stop offset="0.45" stop-color="#dde2e1"/><stop offset="0.72" stop-color="#e9eceb"/><stop offset="1" stop-color="#f0f1f2"/>
</linearGradient>
</defs>
<rect x="46" y="76" width="710" height="229" fill="url(#sky)"/>
<rect x="46" y="305" width="710" height="223" fill="#cdcdcb"/>
<g stroke="#000" stroke-width="1.3" stroke-linejoin="round">
<!-- floor -->
<polygon fill="#460000" points="109.3,440.5 217.4,383 217.4,372 238.3,370.5 264,359 694,359 694,433"/>
<!-- back wall -->
<rect fill="#00d500" x="264" y="263.7" width="148.3" height="95.5"/>
<line x1="299.3" y1="263.7" x2="299.3" y2="359"/>
<line x1="323.6" y1="263.7" x2="323.6" y2="359"/>
<line x1="378.7" y1="263.7" x2="378.7" y2="359"/>
<rect fill="#0000d5" x="299.3" y="287.9" width="24.3" height="71.3"/>
<rect fill="#00d500" x="373.4" y="273.4" width="5.3" height="85.8"/>
<!-- post -->
<rect fill="#00d500" x="392.3" y="256.6" width="7.4" height="113.4" rx="1"/>
<rect fill="#006000" x="392.3" y="256.6" width="7.4" height="6.5" rx="1"/>
<!-- walls right of back -->
<rect fill="#00d500" x="412.9" y="258.4" width="25.4" height="107.9"/>
<rect fill="#00d500" x="438.3" y="244.4" width="26" height="153.3"/>
<polygon fill="#004800" points="464.3,244.4 475.7,236.9 475.7,409.7 464.3,401"/>
<!-- big wall -->
<rect fill="#00d500" x="475.7" y="224.6" width="156.7" height="185.1"/>
<rect fill="#00d500" x="475.7" y="236.4" width="11.2" height="173.3"/>
<!-- pole -->
<rect fill="#00d500" x="358.4" y="224.3" width="10.8" height="186.5" rx="1"/>
<!-- left strips -->
<polygon fill="#003000" points="217.4,253.8 238.3,254.8 238.3,371 217.4,372"/>
<rect fill="#00d500" x="217.9" y="253.7" width="2.6" height="118" stroke-width="0.6"/>
<rect fill="#00d500" x="224.3" y="254.8" width="6.8" height="116.3" stroke-width="0.6"/>
<rect fill="#00d500" x="231.8" y="254.8" width="5.6" height="116.3" stroke-width="0.6"/>
<polygon fill="#004800" points="238.3,254.5 264,263.7 264,359.3 238.3,370"/>
<!-- left wall -->
<polygon fill="#004800" points="109.3,201 217.4,244 217.4,383.2 109.3,440.2"/>
<!-- right wall -->
<polygon fill="#004800" points="632.3,224.8 694.6,206.4 693.8,432.3 632.5,409.6"/>
</g>
<g id="person" stroke-linejoin="round" stroke-linecap="round">
<path fill="#fff" stroke="#000" stroke-width="1.6" d="M450.8,308.1 C454.5,307.8 457.5,309 458,311.5 L459.2,316.8 L458.5,318.8 L458.8,321.4 C458.2,323.4 456.6,324.8 454.6,325.2 L455.2,328.4 L461.5,329.2 C465,330.2 468.5,333 470.5,337 L473,344.5 C472.2,351 469.2,358 466.2,363.5 L464.6,366.6 C463.4,367.6 462.4,367.2 461.9,366.4 L462.6,371.6 L463.3,380 L461.2,420.5 L454.6,420.8 L453.4,402 L452.5,383 L451.6,402 L450.4,420.8 L444.8,420.8 L441.6,380 L441,371.6 L441.8,368.4 C440.8,369.2 439.4,368.8 438.5,367.3 L436,363.2 C432,358 428.2,352 425.3,345.2 C426.8,338 431,331.6 438,329.6 L446.8,327.8 C445,326.2 443.9,324 443.9,321 L444.2,315 C444.8,310.5 447.3,308.3 450.8,308.1 Z"/>
<polygon fill="#00d500" stroke="#000" stroke-width="1" points="430.8,347.5 435.6,345.2 439.2,361.2"/>
<polygon fill="#004800" stroke="#000" stroke-width="1" points="464.6,341.4 469.2,344.6 464.8,359.4"/>
<g stroke="#000" fill="none" stroke-width="0.8">
<path d="M452.4,310 C451.2,313 451.5,316.5 453,319"/>
<path d="M448.2,316.4 C447.6,319 448.4,322 449.9,324"/>
<path d="M453,318.8 C453.8,321.6 455.4,323 458,322.2" stroke-width="1.1"/>
<path d="M454.6,313.4 L457.6,313.2"/>
<path d="M447.5,328.8 L452.3,336 L456.5,328.8"/>
<path d="M428.6,343 L433.8,345.8"/>
<path d="M469.6,340.8 L473,343.6"/>
<path d="M441.2,370.8 C446,373.2 457,373.2 462.6,370.8"/>
<path d="M452.5,381 L452.5,398"/>
<path d="M438.6,366.6 L441.2,363.6 M462.2,366 L465.4,362.8"/>
</g>
<g fill="#000"><circle cx="452.4" cy="340" r="0.75"/><circle cx="452.7" cy="346" r="0.75"/><circle cx="453" cy="352" r="0.75"/><circle cx="453.2" cy="358" r="0.75"/><circle cx="453.3" cy="364" r="0.75"/></g>
</g>
<!-- black frame -->
<polygon fill="#020202" points="94.6,200.3 109.3,200.5 109.3,440.3 693.8,432.8 693.8,206.6 694.6,205.8 707.6,206.2 707.8,446.6 95,455"/>
<!-- axes -->
<line x1="491.2" y1="76" x2="491.2" y2="224" stroke="#5a6498" stroke-width="1.1"/>
<line x1="491.2" y1="224" x2="491.2" y2="426" stroke="#1a2460" stroke-width="1"/>
<line x1="491.4" y1="449" x2="491.4" y2="528" stroke="#7777bb" stroke-width="1" stroke-dasharray="1.5,1.5"/>
<line x1="500.6" y1="446" x2="567.5" y2="527.5" stroke="#cc3333" stroke-width="1"/>
<line x1="708" y1="434.4" x2="756" y2="434.4" stroke="#44bb44" stroke-width="1"/>
<line x1="46" y1="437" x2="95" y2="437" stroke="#9cc49c" stroke-width="1" stroke-dasharray="1.2,1.8"/>
</svg>
</div>
<div class="a" style="left:756px;top:54px;width:268px;height:474px;background:#f0f0f4"></div>
<div class="a" style="left:759.5px;top:54px;width:264.5px;height:474px;background:#eceef2;border-left:1px solid #c6c8cc"></div>
<div class="a" style="left:760px;top:54.3px;width:262.5px;height:17.2px;background:linear-gradient(#a6bcda,#c7d8ec)"></div>
<div class="t" style="left:763.6px;top:60.5px;font-size:8.5px;color:#3a4250;font-weight:bold">Bandeja predeterminada</div>
<div class="a" style="left:1001.8px;top:60.5px;width:8.2px;height:8px;border:1px solid #a9b9cf;background:#c4d3e6"></div>
<div class="a" style="left:1004.8px;top:62px;width:2.2px;height:4px;background:#6a7a90"></div>
<div class="a" style="left:1014px;top:60.5px;width:7.8px;height:8px;border:1px solid #a9b9cf;background:#c4d3e6"></div>
<svg class="a" style="left:1015.5px;top:62px" width="5" height="5" viewBox="0 0 5 5"><path d="M0.5,0.5 L4.5,4.5 M4.5,0.5 L0.5,4.5" stroke="#6a7a90" stroke-width="0.8"/></svg>
<div class="a" style="left:760px;top:71.5px;width:262.5px;height:2px;background:#e9ebef"></div>
<div class="a" style="left:760px;top:73.5px;width:254px;height:1px;background:#d2d4d8"></div>
<div class="a" style="left:1013.5px;top:74px;width:9px;height:453px;background:#fbfbfc;border-left:1px solid #e2e2e6"></div>
<svg class="a" style="left:1015.5px;top:77.5px" width="6" height="4" viewBox="0 0 6 4"><polygon points="0.3,3.7 3,0.5 5.7,3.7" fill="#777"/></svg>
<svg class="a" style="left:1015.5px;top:520.5px" width="6" height="4" viewBox="0 0 6 4"><polygon points="0.3,0.3 3,3.5 5.7,0.3" fill="#777"/></svg>
<div class="a" style="left:761px;top:75.5px;width:252px;height:17px;background:#e1e2e6"></div>
<svg class="a" style="left:767px;top:80.0px" width="6" height="8.5" viewBox="0 0 6 8.5"><polyline points="0.8,0.6 4.8,4.2 0.8,7.8" fill="none" stroke="#6a6a6a" stroke-width="1"/></svg>
<div class="t" style="left:777.8px;top:80.9px;font-size:8.4px;color:#606068;">Información de la entidad</div>
<div class="a" style="left:998.6px;top:76.8px;width:13.4px;height:14px;background:#fff;border:1px solid #d0d0d4;border-radius:1.5px"></div>
<svg class="a" style="left:1002.6px;top:80.8px" width="5.5" height="5.5" viewBox="0 0 5.5 5.5"><path d="M0.5,0.5 L5,5 M5,0.5 L0.5,5" stroke="#666" stroke-width="0.8"/></svg>
<div class="a" style="left:761px;top:93.5px;width:252px;height:17px;background:#e1e2e6"></div>
<svg class="a" style="left:767px;top:98.0px" width="6" height="8.5" viewBox="0 0 6 8.5"><polyline points="0.8,0.6 4.8,4.2 0.8,7.8" fill="none" stroke="#6a6a6a" stroke-width="1"/></svg>
<div class="t" style="left:777.8px;top:98.9px;font-size:8.4px;color:#606068;">Materiales</div>
<div class="a" style="left:998.6px;top:94.8px;width:13.4px;height:14px;background:#fff;border:1px solid #d0d0d4;border-radius:1.5px"></div>
<svg class="a" style="left:1002.6px;top:98.8px" width="5.5" height="5.5" viewBox="0 0 5.5 5.5"><path d="M0.5,0.5 L5,5 M5,0.5 L0.5,5" stroke="#666" stroke-width="0.8"/></svg>
<div class="a" style="left:761px;top:111.5px;width:252px;height:17px;background:#e1e2e6"></div>
<svg class="a" style="left:767px;top:116.0px" width="6" height="8.5" viewBox="0 0 6 8.5"><polyline points="0.8,0.6 4.8,4.2 0.8,7.8" fill="none" stroke="#6a6a6a" stroke-width="1"/></svg>
<div class="t" style="left:777.8px;top:116.9px;font-size:8.4px;color:#606068;">Componentes</div>
<div class="a" style="left:998.6px;top:112.8px;width:13.4px;height:14px;background:#fff;border:1px solid #d0d0d4;border-radius:1.5px"></div>
<svg class="a" style="left:1002.6px;top:116.8px" width="5.5" height="5.5" viewBox="0 0 5.5 5.5"><path d="M0.5,0.5 L5,5 M5,0.5 L0.5,5" stroke="#666" stroke-width="0.8"/></svg>
<div class="a" style="left:761px;top:129.5px;width:252px;height:17px;background:#e1e2e6"></div>
<svg class="a" style="left:767px;top:134.0px" width="6" height="8.5" viewBox="0 0 6 8.5"><polyline points="0.8,0.6 4.8,4.2 0.8,7.8" fill="none" stroke="#6a6a6a" stroke-width="1"/></svg>
<div class="t" style="left:777.8px;top:134.9px;font-size:8.4px;color:#606068;">Estilos</div>
<div class="a" style="left:998.6px;top:130.8px;width:13.4px;height:14px;background:#fff;border:1px solid #d0d0d4;border-radius:1.5px"></div>
<svg class="a" style="left:1002.6px;top:134.8px" width="5.5" height="5.5" viewBox="0 0 5.5 5.5"><path d="M0.5,0.5 L5,5 M5,0.5 L0.5,5" stroke="#666" stroke-width="0.8"/></svg>
<div class="a" style="left:761px;top:147.5px;width:252px;height:17px;background:#e1e2e6"></div>
<svg class="a" style="left:765.5px;top:153.5px" width="9" height="6" viewBox="0 0 9 6"><polyline points="0.8,0.8 4.5,4.8 8.2,0.8" fill="none" stroke="#6a6a6a" stroke-width="1"/></svg>
<div class="t" style="left:777.8px;top:152.9px;font-size:8.4px;color:#606068;">Etiquetas</div>
<div class="a" style="left:998.6px;top:148.8px;width:13.4px;height:14px;background:#fff;border:1px solid #d0d0d4;border-radius:1.5px"></div>
<svg class="a" style="left:1002.6px;top:152.8px" width="5.5" height="5.5" viewBox="0 0 5.5 5.5"><path d="M0.5,0.5 L5,5 M5,0.5 L0.5,5" stroke="#666" stroke-width="0.8"/></svg>
<div class="a" style="left:761px;top:438.5px;width:252px;height:17px;background:#e1e2e6"></div>
<svg class="a" style="left:767px;top:443.0px" width="6" height="8.5" viewBox="0 0 6 8.5"><polyline points="0.8,0.6 4.8,4.2 0.8,7.8" fill="none" stroke="#6a6a6a" stroke-width="1"/></svg>
<div class="t" style="left:777.8px;top:443.9px;font-size:8.4px;color:#606068;">Escenas</div>
<div class="a" style="left:998.6px;top:439.8px;width:13.4px;height:14px;background:#fff;border:1px solid #d0d0d4;border-radius:1.5px"></div>
<svg class="a" style="left:1002.6px;top:443.8px" width="5.5" height="5.5" viewBox="0 0 5.5 5.5"><path d="M0.5,0.5 L5,5 M5,0.5 L0.5,5" stroke="#666" stroke-width="0.8"/></svg>
<div class="a" style="left:761px;top:456.5px;width:252px;height:17px;background:#e1e2e6"></div>
<svg class="a" style="left:767px;top:461.0px" width="6" height="8.5" viewBox="0 0 6 8.5"><polyline points="0.8,0.6 4.8,4.2 0.8,7.8" fill="none" stroke="#6a6a6a" stroke-width="1"/></svg>
<div class="t" style="left:777.8px;top:461.9px;font-size:8.4px;color:#606068;">Instructor</div>
<div class="a" style="left:998.6px;top:457.8px;width:13.4px;height:14px;background:#fff;border:1px solid #d0d0d4;border-radius:1.5px"></div>
<svg class="a" style="left:1002.6px;top:461.8px" width="5.5" height="5.5" viewBox="0 0 5.5 5.5"><path d="M0.5,0.5 L5,5 M5,0.5 L0.5,5" stroke="#666" stroke-width="0.8"/></svg>
<div class="a" style="left:761px;top:474.5px;width:252px;height:17px;background:#e1e2e6"></div>
<svg class="a" style="left:767px;top:479.0px" width="6" height="8.5" viewBox="0 0 6 8.5"><polyline points="0.8,0.6 4.8,4.2 0.8,7.8" fill="none" stroke="#6a6a6a" stroke-width="1"/></svg>
<div class="t" style="left:777.8px;top:479.9px;font-size:8.4px;color:#606068;">Esquema</div>
<div class="a" style="left:998.6px;top:475.8px;width:13.4px;height:14px;background:#fff;border:1px solid #d0d0d4;border-radius:1.5px"></div>
<svg class="a" style="left:1002.6px;top:479.8px" width="5.5" height="5.5" viewBox="0 0 5.5 5.5"><path d="M0.5,0.5 L5,5 M5,0.5 L0.5,5" stroke="#666" stroke-width="0.8"/></svg>
<div class="a" style="left:761px;top:492.5px;width:252px;height:17px;background:#e1e2e6"></div>
<svg class="a" style="left:767px;top:497.0px" width="6" height="8.5" viewBox="0 0 6 8.5"><polyline points="0.8,0.6 4.8,4.2 0.8,7.8" fill="none" stroke="#6a6a6a" stroke-width="1"/></svg>
<div class="t" style="left:777.8px;top:497.9px;font-size:8.4px;color:#606068;">Suavizar aristas</div>
<div class="a" style="left:998.6px;top:493.8px;width:13.4px;height:14px;background:#fff;border:1px solid #d0d0d4;border-radius:1.5px"></div>
<svg class="a" style="left:1002.6px;top:497.8px" width="5.5" height="5.5" viewBox="0 0 5.5 5.5"><path d="M0.5,0.5 L5,5 M5,0.5 L0.5,5" stroke="#666" stroke-width="0.8"/></svg>
<div class="a" style="left:761px;top:510.5px;width:252px;height:17px;background:#e1e2e6"></div>
<svg class="a" style="left:767px;top:515.0px" width="6" height="8.5" viewBox="0 0 6 8.5"><polyline points="0.8,0.6 4.8,4.2 0.8,7.8" fill="none" stroke="#6a6a6a" stroke-width="1"/></svg>
<div class="t" style="left:777.8px;top:515.9px;font-size:8.4px;color:#606068;">Sombras</div>
<div class="a" style="left:998.6px;top:511.8px;width:13.4px;height:14px;background:#fff;border:1px solid #d0d0d4;border-radius:1.5px"></div>
<svg class="a" style="left:1002.6px;top:515.8px" width="5.5" height="5.5" viewBox="0 0 5.5 5.5"><path d="M0.5,0.5 L5,5 M5,0.5 L0.5,5" stroke="#666" stroke-width="0.8"/></svg>
<div class="a" style="left:761px;top:164px;width:252px;height:273px;background:#fff"></div>
<div class="a" style="left:761px;top:164px;width:252px;height:23.5px;background:#f3f5f9"></div>
<div class="a" style="left:761px;top:424px;width:252px;height:13px;background:linear-gradient(#fff,#e9ebf0)"></div>
<svg class="a" style="left:771px;top:171.5px" width="10" height="10" viewBox="0 0 10 10"><circle cx="5" cy="5" r="4.3" fill="none" stroke="#555" stroke-width="0.9"/><path d="M5,2.5 V7.5 M2.5,5 H7.5" stroke="#555" stroke-width="0.9"/></svg>
<svg class="a" style="left:796px;top:171px" width="14" height="12" viewBox="0 0 14 12"><path d="M7,10.2 H0.8 V1.2 H4.5 L5.8,2.6 H11.5 V6" fill="none" stroke="#555" stroke-width="0.9"/><circle cx="10" cy="8.8" r="2.7" fill="#f3f5f9" stroke="#555" stroke-width="0.8"/><path d="M10,7.3 V10.3 M8.5,8.8 H11.5" stroke="#555" stroke-width="0.7"/></svg>
<div class="a" style="left:816px;top:168.2px;width:116px;height:16.4px;background:#fff;border:1px solid #d2d4d8;border-radius:1.5px"></div>
<div class="t" style="left:818.8px;top:172.8px;font-size:8px;color:#c8c8cc;">Buscar</div>
<svg class="a" style="left:940.5px;top:171px" width="12" height="11" viewBox="0 0 12 11"><path d="M1,10 L2.6,6.6 L7.8,1.2 L11,4 L5.6,9 Z M1,10 L3.4,9.2" fill="none" stroke="#8a8a8a" stroke-width="0.8"/></svg>
<svg class="a" style="left:967.5px;top:170px" width="11" height="12" viewBox="0 0 11 12"><path d="M2.5,1 L8,0.5 L10.5,4 L6.5,11.5 L0.5,7.5 Z" fill="#c23a2e"/><path d="M1.2,5.6 L10.2,4.4 L9.2,6.4 L0.9,7.3 Z" fill="#e5c22e"/><path d="M0.9,7.3 L9.2,6.4 L6.5,11.5 Z" fill="#2f5a88"/></svg>
<svg class="a" style="left:995px;top:171.3px" width="10" height="10" viewBox="0 0 10 10"><path d="M0.5,1.8 H5.5 V0.2 L9.7,4.7 L5.5,9.2 V7.6 H0.5 Z" fill="#111"/><rect x="1.4" y="2.8" width="4.4" height="3.9" fill="#6a8bc0"/></svg>
<div class="a" style="left:761px;top:201.2px;width:252px;height:1px;background:#e9ebef"></div>
<div class="a" style="left:795.5px;top:188px;width:1px;height:13px;background:#eaeaee"></div>
<div class="a" style="left:905.4px;top:188px;width:1px;height:13px;background:#eaeaee"></div>
<div class="a" style="left:938.8px;top:188px;width:1px;height:13px;background:#eaeaee"></div>
<div class="a" style="left:978.7px;top:188px;width:1px;height:13px;background:#eaeaee"></div>
<div class="t" style="left:797.4px;top:191.5px;font-size:8.5px;color:#444;">Nombre</div>
<svg class="a" style="left:896px;top:192.5px" width="6" height="5" viewBox="0 0 6 5"><polyline points="0.8,3.8 3,1.3 5.2,3.8" fill="none" stroke="#444" stroke-width="0.9"/></svg>
<div class="t" style="left:940.9px;top:191.5px;font-size:8.2px;color:#444;">Guiones</div>
<div class="a" style="left:761px;top:292.6px;width:252px;height:11px;background:#dce7f3"></div>
<svg class="a" style="left:773.5px;top:203.4px" width="11" height="7.5" viewBox="0 0 11 7.5"><path d="M0.3,3.8 C2.6,0.2 8.4,0.2 10.7,3.8 C8.4,7.3 2.6,7.3 0.3,3.8 Z" fill="#151515"/><ellipse cx="5.5" cy="3.9" rx="2" ry="1.8" fill="#fff"/><circle cx="5.5" cy="3.8" r="1.2" fill="#151515"/></svg>
<div class="t" style="left:797.4px;top:204px;font-size:8.4px;color:#333;">Sin etiqueta</div>
<svg class="a" style="left:773.5px;top:214.9px" width="11" height="7.5" viewBox="0 0 11 7.5"><path d="M0.3,3.8 C2.6,0.2 8.4,0.2 10.7,3.8 C8.4,7.3 2.6,7.3 0.3,3.8 Z" fill="#151515"/><ellipse cx="5.5" cy="3.9" rx="2" ry="1.8" fill="#fff"/><circle cx="5.5" cy="3.8" r="1.2" fill="#151515"/></svg>
<svg class="a" style="left:800px;top:216.2px" width="6" height="5" viewBox="0 0 6 5"><polygon points="0.3,0.4 5.7,0.4 3,4.6" fill="#111"/></svg>
<div class="t" style="left:809.7px;top:215px;font-size:8.4px;color:#333;letter-spacing:-0.3px">Canvas Scan</div>
<svg class="a" style="left:774px;top:226.39999999999998px" width="10" height="7" viewBox="0 0 10 7"><ellipse cx="5" cy="3.5" rx="4.1" ry="2.5" fill="none" stroke="#9c9c9c" stroke-width="0.8"/></svg>
<svg class="a" style="left:806.1px;top:226.7px" width="5" height="6" viewBox="0 0 5 6"><polygon points="0.4,0.3 4.6,3 0.4,5.7" fill="#8a8a8a"/></svg>
<div class="t" style="left:815px;top:227px;font-size:8.4px;color:#a4a4a4;">Mallas</div>
<svg class="a" style="left:773.5px;top:237.4px" width="11" height="7.5" viewBox="0 0 11 7.5"><path d="M0.3,3.8 C2.6,0.2 8.4,0.2 10.7,3.8 C8.4,7.3 2.6,7.3 0.3,3.8 Z" fill="#151515"/><ellipse cx="5.5" cy="3.9" rx="2" ry="1.8" fill="#fff"/><circle cx="5.5" cy="3.8" r="1.2" fill="#151515"/></svg>
<svg class="a" style="left:805.4px;top:238.7px" width="6" height="5" viewBox="0 0 6 5"><polygon points="0.3,0.4 5.7,0.4 3,4.6" fill="#111"/></svg>
<div class="t" style="left:815px;top:238px;font-size:8.4px;color:#333;">RoomPlan</div>
<svg class="a" style="left:773.5px;top:248.8px" width="11" height="7.5" viewBox="0 0 11 7.5"><path d="M0.3,3.8 C2.6,0.2 8.4,0.2 10.7,3.8 C8.4,7.3 2.6,7.3 0.3,3.8 Z" fill="#151515"/><ellipse cx="5.5" cy="3.9" rx="2" ry="1.8" fill="#fff"/><circle cx="5.5" cy="3.8" r="1.2" fill="#151515"/></svg>
<svg class="a" style="left:811px;top:250.1px" width="6" height="5" viewBox="0 0 6 5"><polygon points="0.3,0.4 5.7,0.4 3,4.6" fill="#111"/></svg>
<div class="t" style="left:820.2px;top:249px;font-size:8.4px;color:#333;">Habitación</div>
<svg class="a" style="left:773.5px;top:260.2px" width="11" height="7.5" viewBox="0 0 11 7.5"><path d="M0.3,3.8 C2.6,0.2 8.4,0.2 10.7,3.8 C8.4,7.3 2.6,7.3 0.3,3.8 Z" fill="#151515"/><ellipse cx="5.5" cy="3.9" rx="2" ry="1.8" fill="#fff"/><circle cx="5.5" cy="3.8" r="1.2" fill="#151515"/></svg>
<svg class="a" style="left:816.5px;top:260.8px" width="5" height="6" viewBox="0 0 5 6"><polygon points="0.4,0.3 4.6,3 0.4,5.7" fill="#111"/></svg>
<div class="t" style="left:825.4px;top:261px;font-size:8.4px;color:#333;">Paredes</div>
<svg class="a" style="left:773.5px;top:271.4px" width="11" height="7.5" viewBox="0 0 11 7.5"><path d="M0.3,3.8 C2.6,0.2 8.4,0.2 10.7,3.8 C8.4,7.3 2.6,7.3 0.3,3.8 Z" fill="#151515"/><ellipse cx="5.5" cy="3.9" rx="2" ry="1.8" fill="#fff"/><circle cx="5.5" cy="3.8" r="1.2" fill="#151515"/></svg>
<div class="t" style="left:820.2px;top:272px;font-size:8.4px;color:#333;">Puertas</div>
<svg class="a" style="left:773.5px;top:282.9px" width="11" height="7.5" viewBox="0 0 11 7.5"><path d="M0.3,3.8 C2.6,0.2 8.4,0.2 10.7,3.8 C8.4,7.3 2.6,7.3 0.3,3.8 Z" fill="#151515"/><ellipse cx="5.5" cy="3.9" rx="2" ry="1.8" fill="#fff"/><circle cx="5.5" cy="3.8" r="1.2" fill="#151515"/></svg>
<div class="t" style="left:820.2px;top:283px;font-size:8.4px;color:#333;">Suelos</div>
<svg class="a" style="left:774px;top:294.7px" width="10" height="7" viewBox="0 0 10 7"><ellipse cx="5" cy="3.5" rx="4.1" ry="2.5" fill="none" stroke="#9c9c9c" stroke-width="0.8"/></svg>
<svg class="a" style="left:806.1px;top:295px" width="5" height="6" viewBox="0 0 5 6"><polygon points="0.4,0.3 4.6,3 0.4,5.7" fill="#8a8a8a"/></svg>
<div class="t" style="left:815px;top:295px;font-size:8.4px;color:#a2aab8;">Superficies</div>
<div class="a" style="left:940.5px;top:202px;width:72.5px;height:11px;overflow:hidden"><div class="t" style="left:0px;top:1.6px;font-size:8.6px;color:#333;">Valores predeterminados</div></div>
<div class="a" style="left:940.5px;top:270px;width:72.5px;height:11px;overflow:hidden"><div class="t" style="left:0px;top:1.6px;font-size:8.6px;color:#333;">Valores predeterminados</div></div>
<div class="a" style="left:940.5px;top:281.5px;width:72.5px;height:11px;overflow:hidden"><div class="t" style="left:0px;top:1.6px;font-size:8.6px;color:#333;">Valores predeterminados</div></div>
<div class="a" style="left:915.7px;top:269.8px;width:11.5px;height:11px;background:#0000b0"></div>
<div class="a" style="left:915.7px;top:281.6px;width:11.5px;height:10px;background:#b00000"></div>
<svg class="a" style="left:991.5px;top:203px" width="9" height="9" viewBox="0 0 9 9"><path d="M0.8,8.2 L8,0.8" stroke="#c02525" stroke-width="1.1"/></svg>
<div class="a" style="left:0px;top:528px;width:1024px;height:21px;background:#f0f0f4"></div>
<div class="t" style="left:47px;top:535px;font-size:9px;color:#505050">Haz clic o arrastra para seleccionar objetos. Mayúsculas = Añadir/Sustraer. Ctrl = Añadir. Mayúsculas + Ctrl = Sustraer.</div>
<div class="a" style="left:760px;top:527px;width:254px;height:1px;background:#c8cacf"></div>
<div class="a" style="left:878.5px;top:529px;width:1px;height:18px;background:#dcdce0"></div>
<div class="a" style="left:890.5px;top:530.4px;width:133.5px;height:17.6px;background:#fafafb;border:1px solid #d6d6da;border-right:none"></div>
<div class="a" style="left:42.5px;top:530px;width:1px;height:17px;background:#dcdce0"></div>
<svg class="a" style="left:5px;top:532px" width="12" height="12"><circle cx="6" cy="6" r="5" fill="none" stroke="#b8b8bc" stroke-width="0.8"/><circle cx="6" cy="5" r="1.8" fill="none" stroke="#a8a8ac" stroke-width="0.8"/><path d="M6,7 V9" stroke="#a8a8ac" stroke-width="0.8"/></svg>
<svg class="a" style="left:24px;top:532px" width="12" height="12"><circle cx="6" cy="6" r="5" fill="none" stroke="#b8b8bc" stroke-width="0.8"/><circle cx="6" cy="3.5" r="0.7" fill="#a8a8ac"/><path d="M6,5 V9.2" stroke="#a8a8ac" stroke-width="1"/></svg>

</body></html>
